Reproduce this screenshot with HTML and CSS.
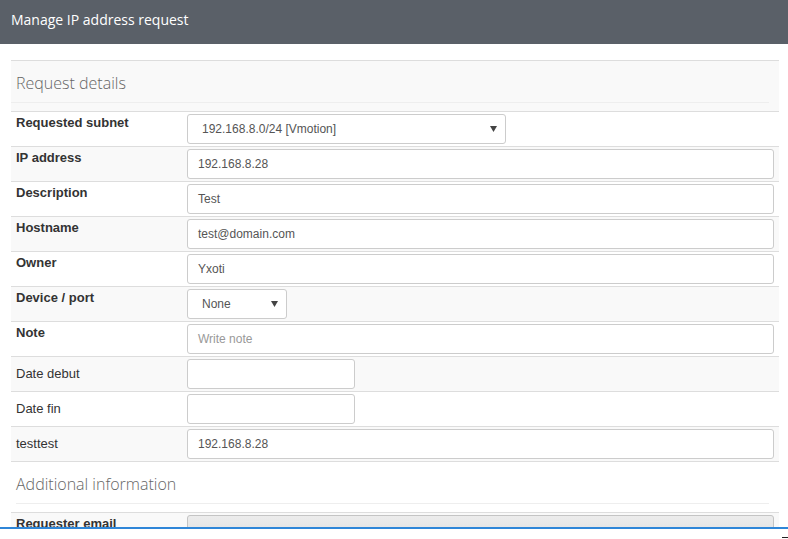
FILE: index.html
```html
<!DOCTYPE html>
<html>
<head>
<meta charset="utf-8">
<link rel="stylesheet" href="styles.css">
</head>
<body>
<div class="topbar">Manage IP address request</div>
<table class="form-table">
  <colgroup><col class="label-col"><col></colgroup>
  <tr class="section first">
    <td colspan="2"><h4>Request details</h4></td>
  </tr>
  <tr>
    <th>Requested subnet</th>
    <td><div class="select wide"><span>192.168.8.0/24 [Vmotion]</span><svg width="7" height="6" viewBox="0 0 7 6"><path d="M0 0H7L3.5 6Z" fill="#444"/></svg></div></td>
  </tr>
  <tr class="alt">
    <th>IP address</th>
    <td><div class="input">192.168.8.28</div></td>
  </tr>
  <tr>
    <th>Description</th>
    <td><div class="input">Test</div></td>
  </tr>
  <tr class="alt">
    <th>Hostname</th>
    <td><div class="input">test@domain.com</div></td>
  </tr>
  <tr>
    <th>Owner</th>
    <td><div class="input">Yxoti</div></td>
  </tr>
  <tr class="alt">
    <th>Device / port</th>
    <td><div class="select small"><span>None</span><svg width="7" height="6" viewBox="0 0 7 6"><path d="M0 0H7L3.5 6Z" fill="#444"/></svg></div></td>
  </tr>
  <tr>
    <th>Note</th>
    <td><div class="input placeholder">Write note</div></td>
  </tr>
  <tr class="alt">
    <th class="normal">Date debut</th>
    <td><div class="input date"></div></td>
  </tr>
  <tr>
    <th class="normal">Date fin</th>
    <td><div class="input date"></div></td>
  </tr>
  <tr class="alt">
    <th class="normal">testtest</th>
    <td><div class="input">192.168.8.28</div></td>
  </tr>
  <tr class="section second">
    <td colspan="2"><h4>Additional information</h4></td>
  </tr>
  <tr class="alt">
    <th>Requester email</th>
    <td><div class="input readonly"></div></td>
  </tr>
</table>
<div class="bottom-bar"><span class="mark"></span></div>
</body>
</html>
```
FILE: styles.css
```css
html, body {
  margin: 0;
  padding: 0;
  background: #fff;
  font-family: "Liberation Sans", Arial, sans-serif;
  overflow: hidden;
}
.topbar {
  height: 44px;
  background: #5a6068;
  color: #fff;
  font-family: "Open Sans", sans-serif;
  font-size: 14px;
  line-height: 40px;
  padding-left: 11px;
  box-sizing: border-box;
}
.form-table {
  margin: 16px 0 0 11px;
  width: 768px;
  border-collapse: collapse;
  table-layout: fixed;
}
.label-col {
  width: 172px;
}
.form-table tr {
  border-top: 1px solid #ddd;
}
.form-table th {
  text-align: left;
  vertical-align: top;
  font-size: 13px;
  font-weight: bold;
  color: #333;
  padding: 2px 0 2px 5px;
  line-height: 18px;
}
.form-table th.normal {
  font-weight: normal;
  padding-top: 8px;
}
.form-table td {
  padding: 2px 5px 2px 4px;
  vertical-align: top;
}
.form-table tr.alt {
  background: #f9f9f9;
}
.form-table tr.section td {
  padding: 0;
}
.form-table tr.first {
  background: #f9f9f9;
}
h4 {
  margin: 0 10px 8px 0;
  height: 42px;
  box-sizing: border-box;
  border-bottom: 1px solid #eee;
  font-family: "Open Sans", sans-serif;
  font-weight: 300;
  font-size: 16px;
  color: #666;
  line-height: 44px;
  padding-left: 5px;
}
tr.second h4 {
  margin-left: 5px;
  padding-left: 0;
}
.input, .select {
  height: 30px;
  box-sizing: border-box;
  border: 1px solid #ccc;
  border-radius: 3px;
  background: #fff;
  font-size: 12px;
  color: #555;
  line-height: 28px;
  padding: 0 10px;
}
.input.placeholder {
  color: #999;
}
.input.date {
  width: 168px;
}
.input.readonly {
  background: linear-gradient(#ececec, #dcdcdc);
  border-color: #c4c4c4;
}
.select {
  display: flex;
  align-items: center;
  justify-content: space-between;
  padding: 0 8px 0 14px;
}
.select.wide {
  width: 319px;
}
.select.small {
  width: 100px;
  padding-right: 8px;
}
.select svg {
  display: block;
}
.bottom-bar {
  position: fixed;
  left: 0;
  right: 0;
  bottom: 0;
  height: 10px;
  background: #fff;
  border-top: 2px solid #2f86d8;
}
.bottom-bar .mark {
  position: absolute;
  right: 0;
  bottom: 1px;
  width: 6px;
  height: 1px;
  background: #222;
}
```
